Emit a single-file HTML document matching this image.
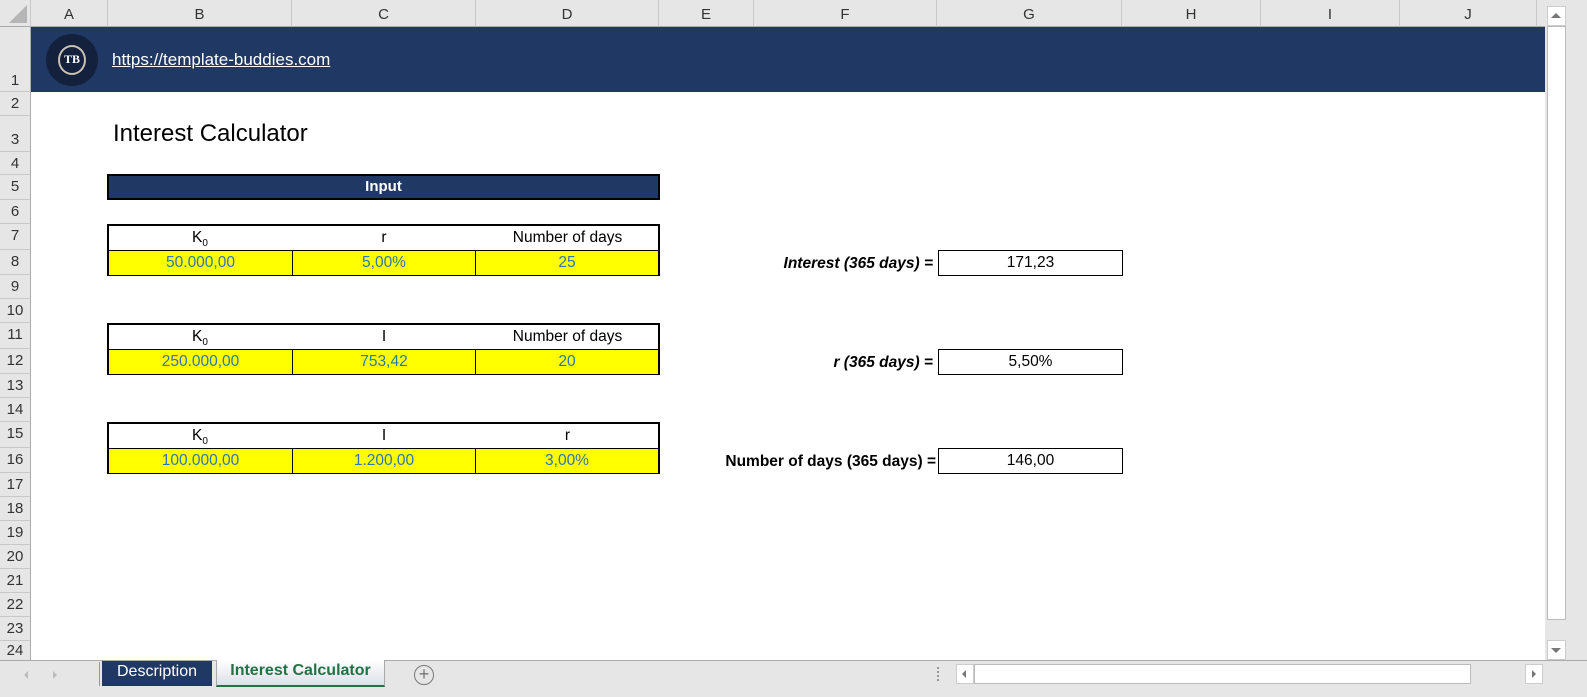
<!DOCTYPE html>
<html><head><meta charset="utf-8"><style>
*{margin:0;padding:0;box-sizing:border-box}
body{width:1587px;height:697px;position:relative;overflow:hidden;background:#fff;font-family:"Liberation Sans",Calibri,sans-serif;}
.a{position:absolute}
.ch{position:absolute;top:0;height:27px;background:#e6e6e6;border-right:1px solid #c8c8c8;border-bottom:1px solid #aaa;font-size:15px;color:#333;text-align:center;line-height:30px}
.rh{position:absolute;left:0;width:31px;background:#e6e6e6;border-bottom:1px solid #c8c8c8;border-right:1px solid #aaa;font-size:15px;color:#333;text-align:center;padding-top:3px}
.c{position:absolute;font-size:15.5px;text-align:center;color:#000;line-height:24px}
.y{background:#ffff00;color:#2e75b6}
.box{position:absolute;border:2px solid #000}
.lbl{position:absolute;font-size:15.5px;font-weight:bold;font-style:italic;text-align:right;line-height:25px}
.out{position:absolute;border:1px solid #000;width:185px;height:26px;text-align:center;font-size:15.5px;line-height:24px}
</style></head><body>
<div class="ch" style="left:0;width:31px"><div class="a" style="right:3px;bottom:3px;width:0;height:0;border-left:18px solid transparent;border-bottom:18px solid #b5b5b5"></div></div>
<div class="ch" style="left:31px;width:77px">A</div>
<div class="ch" style="left:108px;width:184px">B</div>
<div class="ch" style="left:292px;width:184px">C</div>
<div class="ch" style="left:476px;width:183px">D</div>
<div class="ch" style="left:659px;width:95px">E</div>
<div class="ch" style="left:754px;width:183px">F</div>
<div class="ch" style="left:937px;width:185px">G</div>
<div class="ch" style="left:1122px;width:139px">H</div>
<div class="ch" style="left:1261px;width:139px">I</div>
<div class="ch" style="left:1400px;width:137px">J</div>
<div class="ch" style="left:1537px;width:8px;border-right:none"></div>
<div class="rh" style="top:27px;height:65px;padding-top:45px">1</div>
<div class="rh" style="top:92px;height:24px">2</div>
<div class="rh" style="top:116px;height:36px;padding-top:15px">3</div>
<div class="rh" style="top:152px;height:23px">4</div>
<div class="rh" style="top:175px;height:25px">5</div>
<div class="rh" style="top:200px;height:24px">6</div>
<div class="rh" style="top:224px;height:26px">7</div>
<div class="rh" style="top:250px;height:25px">8</div>
<div class="rh" style="top:275px;height:24px">9</div>
<div class="rh" style="top:299px;height:24px">10</div>
<div class="rh" style="top:323px;height:26px">11</div>
<div class="rh" style="top:349px;height:25px">12</div>
<div class="rh" style="top:374px;height:24px">13</div>
<div class="rh" style="top:398px;height:24px">14</div>
<div class="rh" style="top:422px;height:26px">15</div>
<div class="rh" style="top:448px;height:25px">16</div>
<div class="rh" style="top:473px;height:24px">17</div>
<div class="rh" style="top:497px;height:24px">18</div>
<div class="rh" style="top:521px;height:24px">19</div>
<div class="rh" style="top:545px;height:24px">20</div>
<div class="rh" style="top:569px;height:24px">21</div>
<div class="rh" style="top:593px;height:24px">22</div>
<div class="rh" style="top:617px;height:24px">23</div>
<div class="rh" style="top:641px;height:20px;padding-top:1px">24</div>
<div class="a" style="left:31px;top:27px;width:1514px;height:65px;background:#203864"></div>
<div class="a" style="left:46px;top:34px;width:52px;height:52px;border-radius:50%;background:#13213d"></div>
<div class="a" style="left:58px;top:45px;width:28px;height:30px;border-radius:50%;border:2px solid #c9c0b0;color:#fff;font:bold 12px 'Liberation Serif',serif;text-align:center;line-height:24px">TB</div>
<div class="a" style="left:112px;top:50px;color:#fff;font-size:17px;text-decoration:underline">https://template-buddies.com</div>
<div class="a" style="left:113px;top:120px;font-size:24px">Interest Calculator</div>
<div class="a" style="left:107px;top:174px;width:553px;height:26px;background:#203864;border:2px solid #000;color:#fff;font-weight:bold;font-size:15px;text-align:center;line-height:22px">Input</div>
<div class="box" style="left:107px;top:224px;width:553px;height:52px"></div>
<div class="c" style="left:108px;top:226px;width:184px">K<sub style="font-size:10px">0</sub></div>
<div class="c" style="left:292px;top:226px;width:184px">r</div>
<div class="c" style="left:476px;top:226px;width:183px">Number of days</div>
<div class="c y" style="left:109px;top:250px;width:549px;height:24px;border-top:1px solid #000"></div>
<div class="c y" style="left:109px;top:251px;width:183px">50.000,00</div>
<div class="c y" style="left:292px;top:251px;width:184px;border-left:1px solid #000;border-right:1px solid #000">5,00%</div>
<div class="c y" style="left:476px;top:251px;width:182px">25</div>
<div class="box" style="left:107px;top:323px;width:553px;height:52px"></div>
<div class="c" style="left:108px;top:325px;width:184px">K<sub style="font-size:10px">0</sub></div>
<div class="c" style="left:292px;top:325px;width:184px">I</div>
<div class="c" style="left:476px;top:325px;width:183px">Number of days</div>
<div class="c y" style="left:109px;top:349px;width:549px;height:24px;border-top:1px solid #000"></div>
<div class="c y" style="left:109px;top:350px;width:183px">250.000,00</div>
<div class="c y" style="left:292px;top:350px;width:184px;border-left:1px solid #000;border-right:1px solid #000">753,42</div>
<div class="c y" style="left:476px;top:350px;width:182px">20</div>
<div class="box" style="left:107px;top:422px;width:553px;height:52px"></div>
<div class="c" style="left:108px;top:424px;width:184px">K<sub style="font-size:10px">0</sub></div>
<div class="c" style="left:292px;top:424px;width:184px">I</div>
<div class="c" style="left:476px;top:424px;width:183px">r</div>
<div class="c y" style="left:109px;top:448px;width:549px;height:24px;border-top:1px solid #000"></div>
<div class="c y" style="left:109px;top:449px;width:183px">100.000,00</div>
<div class="c y" style="left:292px;top:449px;width:184px;border-left:1px solid #000;border-right:1px solid #000">1.200,00</div>
<div class="c y" style="left:476px;top:449px;width:182px">3,00%</div>
<div class="lbl" style="left:640px;top:251px;width:293px">Interest (365 days) =</div>
<div class="out" style="left:938px;top:250px">171,23</div>
<div class="lbl" style="left:640px;top:350px;width:293px">r (365 days) =</div>
<div class="out" style="left:938px;top:349px">5,50%</div>
<div class="lbl" style="left:640px;top:449px;width:296px;font-style:normal">Number of days (365 days) =</div>
<div class="out" style="left:938px;top:448px">146,00</div>
<div class="a" style="left:1545px;top:0;width:42px;height:697px;background:#e6e6e6"></div>
<div class="a" style="left:1547px;top:6px;width:19px;height:20px;background:#fff;border:1px solid #ccc"></div>
<div class="a" style="left:1551px;top:13px;border-left:5px solid transparent;border-right:5px solid transparent;border-bottom:5px solid #777"></div>
<div class="a" style="left:1547px;top:26px;width:19px;height:594px;background:#fff;border:1px solid #bbb"></div>
<div class="a" style="left:1547px;top:640px;width:19px;height:20px;background:#fff;border:1px solid #ccc"></div>
<div class="a" style="left:1551px;top:648px;border-left:5px solid transparent;border-right:5px solid transparent;border-top:5px solid #777"></div>
<div class="a" style="left:0;top:660px;width:1587px;height:37px;background:#e6e6e6;border-top:1px solid #aaa"></div>
<div class="a" style="left:24px;top:671px;border-top:4px solid transparent;border-bottom:4px solid transparent;border-right:4px solid #bbb"></div>
<div class="a" style="left:53px;top:671px;border-top:4px solid transparent;border-bottom:4px solid transparent;border-left:4px solid #bbb"></div>
<div class="a" style="left:99px;top:662px;width:1px;height:24px;background:#999"></div>
<div class="a" style="left:102px;top:661px;width:110px;height:25px;background:#203864;color:#fff;font-size:16px;text-align:center;line-height:22px">Description</div>
<div class="a" style="left:216px;top:660px;width:169px;height:27px;background:linear-gradient(#fff,#dde0e8);border-bottom:2px solid #217346;border-left:1px solid #aaa;border-right:1px solid #aaa;color:#217346;font-weight:bold;font-size:16px;text-align:center;line-height:22px">Interest Calculator</div>
<div class="a" style="left:414px;top:665px;width:20px;height:20px;border:1.5px solid #777;border-radius:50%;color:#777;font-size:18px;text-align:center;line-height:16px">+</div>
<div class="a" style="left:937px;top:667px;width:2px;height:14px;border-left:2px dotted #999"></div>
<div class="a" style="left:956px;top:664px;width:18px;height:20px;background:#fff;border:1px solid #ccc"></div>
<div class="a" style="left:962px;top:670px;border-top:4px solid transparent;border-bottom:4px solid transparent;border-right:4px solid #777"></div>
<div class="a" style="left:974px;top:664px;width:497px;height:20px;background:#fff;border:1px solid #bbb"></div>
<div class="a" style="left:1525px;top:664px;width:18px;height:20px;background:#fff;border:1px solid #ccc"></div>
<div class="a" style="left:1532px;top:670px;border-top:4px solid transparent;border-bottom:4px solid transparent;border-left:4px solid #777"></div>
</body></html>
